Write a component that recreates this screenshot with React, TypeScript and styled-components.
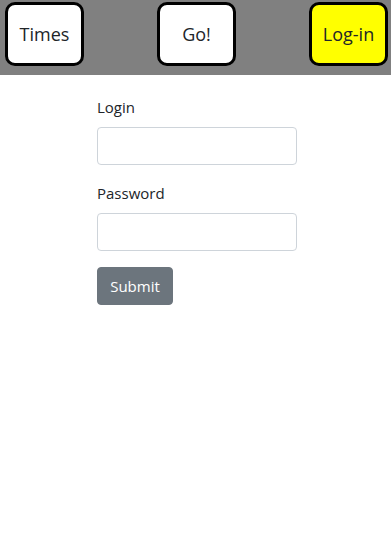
import styled, { createGlobalStyle } from "styled-components";

const GlobalStyle = createGlobalStyle`
  * { box-sizing: border-box; }
  body {
    margin: 0;
    background: #fff;
    font-family: "Open Sans", "Noto Sans", sans-serif;
    font-size: 15px;
    line-height: 24px;
    color: #212529;
  }
`;

// --------------------- HEADER ---------------------------------

const Header = styled.header`
  display: flex;
  justify-content: space-between;
  align-items: flex-start;
  height: 75px;
  padding: 2px 3px 0 5px;
  background: #808080;
`;

const NavButton = styled.button<{ $active?: boolean }>`
  width: 79px;
  height: 64px;
  border: 3px solid #000;
  border-radius: 10px;
  background: ${({ $active }) => ($active ? "#ffff00" : "#fff")};
  color: #212529;
  font-family: inherit;
  font-size: 18px;
  padding: 0;
  cursor: pointer;
`;

// --------------------- FORM ---------------------------------

const Form = styled.form`
  width: 200px;
  margin: 20px 0 0 97px;
`;

const Field = styled.div`
  margin-bottom: 16px;
`;

const Label = styled.label`
  display: block;
  margin-bottom: 8px;
`;

const Input = styled.input`
  display: block;
  width: 100%;
  height: 38px;
  padding: 6px 12px;
  border: 1px solid #ced4da;
  border-radius: 4px;
  font-family: inherit;
  font-size: 16px;
`;

const Submit = styled.button`
  height: 38px;
  width: 76px;
  padding: 0;
  border: 1px solid #6c757d;
  border-radius: 4px;
  background: #6c757d;
  color: #fff;
  font-family: inherit;
  font-size: 15px;
`;

export default function App() {
  return (
    <>
      <GlobalStyle />
      <Header>
        <NavButton>Times</NavButton>
        <NavButton>Go!</NavButton>
        <NavButton $active>Log-in</NavButton>
      </Header>
      <Form onSubmit={(e) => e.preventDefault()}>
        <Field>
          <Label htmlFor="login">Login</Label>
          <Input id="login" type="text" />
        </Field>
        <Field>
          <Label htmlFor="password">Password</Label>
          <Input id="password" type="password" />
        </Field>
        <Submit type="submit">Submit</Submit>
      </Form>
    </>
  );
}
